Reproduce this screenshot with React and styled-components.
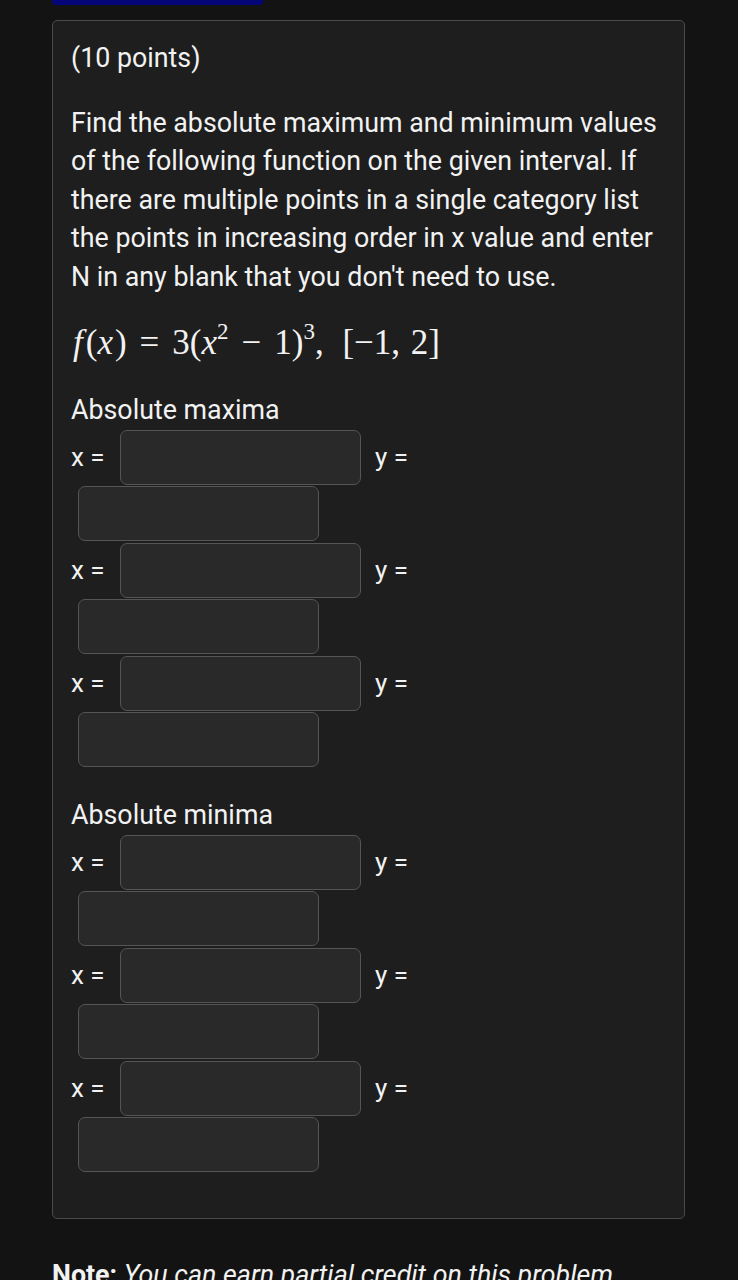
import React from "react";
import styled, { createGlobalStyle } from "styled-components";

const Global = createGlobalStyle`
  html, body { margin: 0; padding: 0; background: #131313; }
  body { font-family: Roboto, "Noto Sans", sans-serif; color: #f2f2f2; }
  * { box-sizing: border-box; }
`;

const Page = styled.div`
  padding: 0 53px 0 52px;
  height: 1280px;
  overflow: hidden;
`;

const TopButton = styled.div`
  width: 211px;
  height: 5px;
  background: #05057a;
  border-radius: 0 0 4px 4px;
`;

const Card = styled.div`
  margin-top: 15px;
  width: 633px;
  background: #1e1e1e;
  border: 1px solid #4a4a4a;
  border-radius: 5px;
  padding: 18px 18px 46px 18px;
`;

const Text = styled.div`
  font-size: 26.8px;
  line-height: 38.5px;
  margin-top: ${(p) => p.$mt || "0"};
`;

const Formula = styled.div`
  font-family: "Liberation Serif", "DejaVu Serif", serif;
  font-size: 35px;
  line-height: 50px;
  height: 50px;
  margin-top: 22px;
  margin-bottom: 23px;
  padding-left: 2px;
  color: #f2f2f2;
  white-space: nowrap;
  sup { font-size: 23px; line-height: 0; vertical-align: 15px; }
`;

const Var = styled.i`
  font-style: italic;
  margin-right: ${(p) => p.$mr || "0"};
`;

const Op = styled.span`
  margin: 0 ${(p) => p.$sp || "0"};
`;

const Group = styled.div`
  display: flex;
  flex-direction: column;
  gap: 1.5px;
`;

const Row = styled.div`
  display: flex;
  align-items: center;
  padding-left: ${(p) => p.$indent || "0"};
`;

const Label = styled.span`
  font-size: 26px;
  width: ${(p) => p.$w || "auto"};
  flex: none;
`;

const Box = styled.input`
  width: 241px;
  height: 55px;
  flex: none;
  background: #292929;
  border: 1.5px solid #555;
  border-radius: 7px;
  outline: none;
  margin-right: ${(p) => p.$mr || "0"};
`;

const Note = styled.div`
  margin-top: 37px;
  font-size: 26.8px;
  line-height: 38.5px;
  white-space: nowrap;
  b { font-weight: 700; }
  em { font-style: italic; }
`;

function Pair() {
  return (
    <>
      <Row>
        <Label $w="49px">x =</Label>
        <Box $mr="14px" />
        <Label>y =</Label>
      </Row>
      <Row $indent="7px">
        <Box />
      </Row>
    </>
  );
}

export default function App() {
  return (
    <Page>
      <Global />
      <TopButton />
      <Card>
        <Text>(10 points)</Text>
        <Text $mt="26px">
          Find the absolute maximum and minimum values of the following function on the given interval. If there are multiple points in a single category list the points in increasing order in x value and enter N in any blank that you don't need to use.
        </Text>
        <Formula>
          <Var $mr="3px">f</Var>(<Var $mr="2px">x</Var>)<Op $sp="13px">=</Op>3(<Var>x</Var>
          <sup>2</sup>
          <Op $sp="13px">−</Op>1)<sup>3</sup>,<Op $sp="5px"> </Op>[−1,<Op $sp="1px"> </Op>2]
        </Formula>
        <Text>Absolute maxima</Text>
        <Group>
          <Pair />
          <Pair />
          <Pair />
        </Group>
        <Text $mt="29px">Absolute minima</Text>
        <Group>
          <Pair />
          <Pair />
          <Pair />
        </Group>
      </Card>
      <Note>
        <b>Note:</b> <em>You can earn partial credit on this problem.</em>
      </Note>
    </Page>
  );
}
